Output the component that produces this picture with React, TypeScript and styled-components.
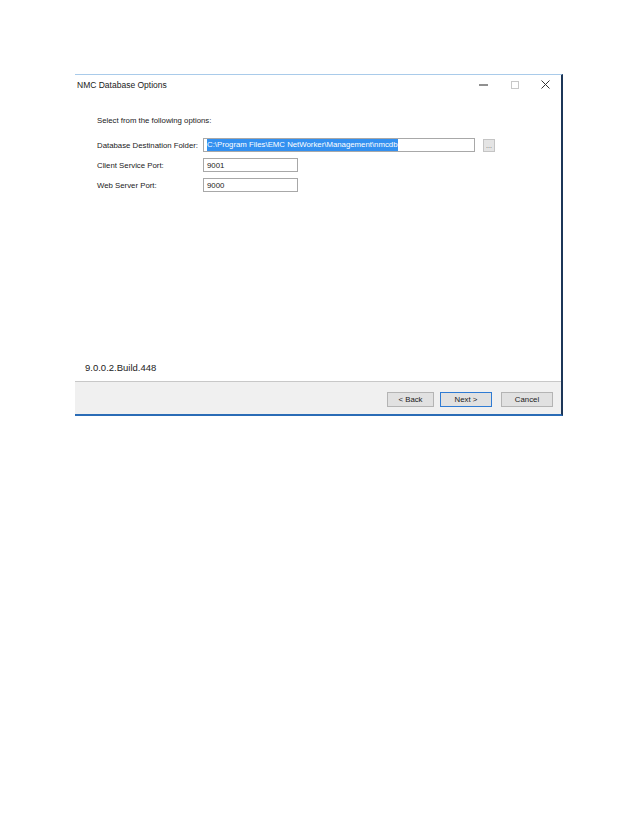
import React from 'react';
import styled, { createGlobalStyle } from 'styled-components';

const GlobalStyle = createGlobalStyle`
  html, body {
    margin: 0;
    padding: 0;
    background: #ffffff;
  }
  body {
    font-family: "Liberation Sans", Arial, sans-serif;
    color: #000;
  }
`;

const Page = styled.div`
  width: 638px;
  height: 826px;
  padding: 74px 0 0 75px;
  box-sizing: border-box;
`;

const Dialog = styled.div`
  width: 488px;
  height: 342px;
  box-sizing: border-box;
  border-top: 1px solid #a9cbea;
  border-right: 2px solid #1c3658;
  border-bottom: 2px solid #2a6cb6;
  background: #fff;
  display: flex;
  flex-direction: column;
`;

const TitleBar = styled.div`
  height: 19px;
  display: flex;
  align-items: center;
  justify-content: space-between;
  padding: 0 0 0 2px;
`;

const Title = styled.div`
  font-size: 8.5px;
  color: #1a1a1a;
`;

const Controls = styled.div`
  display: flex;
  align-items: center;
  height: 100%;
`;

const ControlButton = styled.div`
  width: 31px;
  height: 100%;
  display: flex;
  align-items: center;
  justify-content: center;
`;

const Body = styled.div`
  flex: 1;
  display: flex;
  flex-direction: column;
`;

const Fields = styled.div`
  padding: 22px 0 0 22px;
  display: flex;
  flex-direction: column;
`;

const Intro = styled.div`
  font-size: 7.8px;
  color: #1a1a1a;
  margin-bottom: 13px;
`;

const FieldRow = styled.div`
  display: flex;
  align-items: center;
  height: 14px;
  margin-bottom: 6px;
`;

const Label = styled.div`
  width: 106px;
  font-size: 7.8px;
  color: #1a1a1a;
`;

const TextBox = styled.div<{ $width: number }>`
  width: ${(p) => p.$width}px;
  height: 14px;
  box-sizing: border-box;
  border: 1px solid #a8a8a8;
  background: #fff;
  display: flex;
  align-items: center;
  padding-left: 3px;
  font-size: 7.8px;
  color: #1a1a1a;
  overflow: hidden;
  white-space: nowrap;
`;

const Selected = styled.span`
  background: #3390f0;
  color: #fff;
  padding: 1px 0;
  line-height: 10px;
`;

const BrowseButton = styled.div`
  width: 12px;
  height: 13px;
  margin-left: 8px;
  box-sizing: border-box;
  border: 1px solid #c4c4c4;
  background: #e4e4e4;
  font-size: 7px;
  color: #666;
  display: flex;
  align-items: flex-end;
  justify-content: center;
  padding-bottom: 2px;
  line-height: 1;
`;

const Version = styled.div`
  margin-top: auto;
  padding: 0 0 8px 10px;
  font-size: 9.5px;
  color: #222;
`;

const Footer = styled.div`
  height: 33px;
  border-top: 1px solid #c8c8c8;
  background: #f0f0f0;
  display: flex;
  align-items: center;
  justify-content: flex-end;
  gap: 6px;
  padding: 2px 8px 0 0;
  box-sizing: border-box;
`;

const Button = styled.div<{ $primary?: boolean; $width?: number; $gapLeft?: number }>`
  width: ${(p) => p.$width ?? 52}px;
  height: 15px;
  box-sizing: border-box;
  border: 1px solid ${(p) => (p.$primary ? '#2f7bd3' : '#b4b4b4')};
  background: #e1e1e1;
  font-size: 7.8px;
  color: #1a1a1a;
  display: flex;
  align-items: center;
  justify-content: center;
  margin-left: ${(p) => p.$gapLeft ?? 0}px;
`;

const MinimizeIcon = () => (
  <svg width="9" height="9" viewBox="0 0 9 9">
    <line x1="0" y1="5" x2="9" y2="5" stroke="#222" strokeWidth="1" />
  </svg>
);

const MaximizeIcon = () => (
  <svg width="8" height="8" viewBox="0 0 8 8">
    <rect x="0.5" y="0.5" width="7" height="7" fill="none" stroke="#c8c8c8" strokeWidth="1" />
  </svg>
);

const CloseIcon = () => (
  <svg width="9" height="9" viewBox="0 0 9 9">
    <path d="M0.5 0.5 L8.5 8.5 M8.5 0.5 L0.5 8.5" stroke="#333" strokeWidth="1" />
  </svg>
);

const App: React.FC = () => {
  return (
    <>
      <GlobalStyle />
      <Page>
        <Dialog>
          <TitleBar>
            <Title>NMC Database Options</Title>
            <Controls>
              <ControlButton>
                <MinimizeIcon />
              </ControlButton>
              <ControlButton>
                <MaximizeIcon />
              </ControlButton>
              <ControlButton>
                <CloseIcon />
              </ControlButton>
            </Controls>
          </TitleBar>

          <Body>
            <Fields>
              <Intro>Select from the following options:</Intro>
              <FieldRow>
                <Label>Database Destination Folder:</Label>
                <TextBox $width={272}>
                  <Selected>C:\Program Files\EMC NetWorker\Management\nmcdb</Selected>
                </TextBox>
                <BrowseButton>...</BrowseButton>
              </FieldRow>
              <FieldRow>
                <Label>Client Service Port:</Label>
                <TextBox $width={95}>9001</TextBox>
              </FieldRow>
              <FieldRow>
                <Label>Web Server Port:</Label>
                <TextBox $width={95}>9000</TextBox>
              </FieldRow>
            </Fields>
            <Version>9.0.0.2.Build.448</Version>
          </Body>

          <Footer>
            <Button $width={47}>&lt; Back</Button>
            <Button $primary>Next &gt;</Button>
            <Button $gapLeft={3}>Cancel</Button>
          </Footer>
        </Dialog>
      </Page>
    </>
  );
};

export default App;
